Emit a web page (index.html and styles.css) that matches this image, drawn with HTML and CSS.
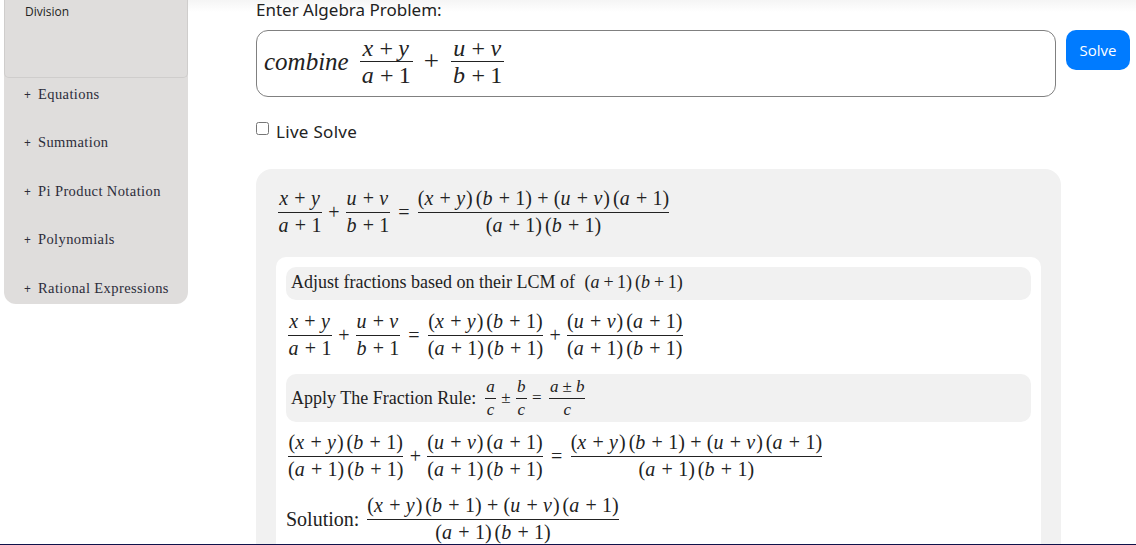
FILE: index.html
```html
<!DOCTYPE html>
<html lang="en">
<head>
<meta charset="utf-8">
<title>Algebra Calculator</title>
<link rel="stylesheet" href="styles.css">
</head>
<body>
<div class="page">
  <aside class="sidebar">
    <div class="panel"><span class="panel-item">Division</span></div>
    <ul class="topics">
      <li><span class="plus">+</span>Equations</li>
      <li><span class="plus">+</span>Summation</li>
      <li><span class="plus">+</span>Pi Product Notation</li>
      <li><span class="plus">+</span>Polynomials</li>
      <li><span class="plus">+</span>Rational Expressions</li>
    </ul>
  </aside>
  <main class="main">
    <label class="prompt">Enter Algebra Problem:</label>
    <div class="input-row">
      <div class="math-input math">
        <i class="combine">combine</i>
        <span class="frac"><span class="num"><i>x</i><b>+</b><i>y</i></span><span class="den"><i>a</i><b>+</b>1</span></span>
        <b class="big-op">+</b>
        <span class="frac"><span class="num"><i>u</i><b>+</b><i>v</i></span><span class="den"><i>b</i><b>+</b>1</span></span>
      </div>
      <button class="solve">Solve</button>
    </div>
    <label class="live"><input type="checkbox" class="live-box"><span>Live Solve</span></label>
    <section class="result">
      <div class="eq math first">
        <span class="frac simple"><span class="num"><i>x</i><b>+</b><i>y</i></span><span class="den"><i>a</i><b>+</b>1</span></span>
        <b class="op">+</b>
        <span class="frac simple"><span class="num"><i>u</i><b>+</b><i>v</i></span><span class="den"><i>b</i><b>+</b>1</span></span>
        <b class="op eqs">=</b>
        <span class="frac"><span class="num">(<i>x</i><b>+</b><i>y</i>)<u></u>(<i>b</i><b>+</b>1)<b>+</b>(<i>u</i><b>+</b><i>v</i>)<u></u>(<i>a</i><b>+</b>1)</span><span class="den">(<i>a</i><b>+</b>1)<u></u>(<i>b</i><b>+</b>1)</span></span>
      </div>
      <div class="steps">
        <div class="step-title">Adjust fractions based on their LCM of <span class="math inline-math">(<i>a</i><b>+</b>1)<u></u>(<i>b</i><b>+</b>1)</span></div>
        <div class="eq math">
          <span class="frac simple"><span class="num"><i>x</i><b>+</b><i>y</i></span><span class="den"><i>a</i><b>+</b>1</span></span>
          <b class="op">+</b>
          <span class="frac simple"><span class="num"><i>u</i><b>+</b><i>v</i></span><span class="den"><i>b</i><b>+</b>1</span></span>
          <b class="op eqs">=</b>
          <span class="frac"><span class="num">(<i>x</i><b>+</b><i>y</i>)<u></u>(<i>b</i><b>+</b>1)</span><span class="den">(<i>a</i><b>+</b>1)<u></u>(<i>b</i><b>+</b>1)</span></span>
          <b class="op">+</b>
          <span class="frac"><span class="num">(<i>u</i><b>+</b><i>v</i>)<u></u>(<i>a</i><b>+</b>1)</span><span class="den">(<i>a</i><b>+</b>1)<u></u>(<i>b</i><b>+</b>1)</span></span>
        </div>
        <div class="step-title rule-title">Apply The Fraction Rule:<span class="math small-eq"><span class="frac"><span class="num"><i>a</i></span><span class="den"><i>c</i></span></span><b class="op">±</b><span class="frac"><span class="num"><i>b</i></span><span class="den"><i>c</i></span></span><b class="op">=</b><span class="frac wide"><span class="num"><i>a</i><b>±</b><i>b</i></span><span class="den"><i>c</i></span></span></span></div>
        <div class="eq math third">
          <span class="frac"><span class="num">(<i>x</i><b>+</b><i>y</i>)<u></u>(<i>b</i><b>+</b>1)</span><span class="den">(<i>a</i><b>+</b>1)<u></u>(<i>b</i><b>+</b>1)</span></span>
          <b class="op">+</b>
          <span class="frac"><span class="num">(<i>u</i><b>+</b><i>v</i>)<u></u>(<i>a</i><b>+</b>1)</span><span class="den">(<i>a</i><b>+</b>1)<u></u>(<i>b</i><b>+</b>1)</span></span>
          <b class="op eqs">=</b>
          <span class="frac"><span class="num">(<i>x</i><b>+</b><i>y</i>)<u></u>(<i>b</i><b>+</b>1)<b>+</b>(<i>u</i><b>+</b><i>v</i>)<u></u>(<i>a</i><b>+</b>1)</span><span class="den">(<i>a</i><b>+</b>1)<u></u>(<i>b</i><b>+</b>1)</span></span>
        </div>
        <div class="eq math solution">
          <span class="sol-label">Solution:</span>
          <span class="frac"><span class="num">(<i>x</i><b>+</b><i>y</i>)<u></u>(<i>b</i><b>+</b>1)<b>+</b>(<i>u</i><b>+</b><i>v</i>)<u></u>(<i>a</i><b>+</b>1)</span><span class="den">(<i>a</i><b>+</b>1)<u></u>(<i>b</i><b>+</b>1)</span></span>
        </div>
      </div>
    </section>
  </main>
</div>
<div class="footer-line"></div>
</body>
</html>
```
FILE: styles.css
```css
* { box-sizing: border-box; }
html, body { margin: 0; height: 545px; overflow: hidden; background: #fff; }
body { display: flex; flex-direction: column; color: #222; }
.page { flex: 1; min-height: 0; display: flex; align-items: flex-start; overflow: hidden; position: relative; }
.page::before { content: ""; position: absolute; left: 188px; right: 0; top: 0; height: 12px; background: linear-gradient(#f5f5f5, #fff); }
.footer-line { height: 1px; background: #10124a; flex: none; }

.sidebar { width: 184px; margin-left: 4px; background: #dfdddc; border-radius: 0 0 12px 12px; flex: none; height: 304px; }
.panel { height: 78px; border: 1px solid #cfcdcc; border-top: 0; border-radius: 0 0 5px 5px; padding: 4px 0 0 20px; font: 12px/15px "Open Sans", sans-serif; color: #222; }
.topics { list-style: none; margin: 0; padding: 0; font: 14.5px/17px "Liberation Serif", serif; color: #2c2c3a; }
.topics li { height: 48.5px; padding: 7.7px 0 0 20px; white-space: nowrap; letter-spacing: .4px; }
.plus { display: inline-block; width: 14px; font-family: "Open Sans", sans-serif; font-size: 12px; }

.main { position: relative; margin-left: 68px; width: 874px; flex: none; }
.prompt { display: block; font: 17px/19px "Noto Sans", sans-serif; color: #222; height: 30px; }
.input-row { display: flex; gap: 10px; align-items: flex-start; }
.math-input { width: 800px; height: 67px; border: 1px solid #808080; border-radius: 12px; padding: 0 7px 4px; display: flex; align-items: center; font-size: 24px; }
.math .combine { font-size: 25px; margin-right: 11px; letter-spacing: 0; }
.math-input .frac .num, .math-input .frac .den { line-height: 26px; padding: 0 2px; }
.math-input b { margin: 0 5px; }
.math-input .big-op { margin: 0 12px 0 11px; font-size: 27px; }
.solve { width: 64px; height: 40px; border: 0; border-radius: 10px; background: #007bff; color: #fff; font: 15px "Open Sans", sans-serif; padding: 0; }
.live { display: flex; align-items: flex-start; margin-top: 24px; height: 24px; font: 17px/22px "Noto Sans", sans-serif; color: #222; letter-spacing: .3px; }
.live-box { width: 13px; height: 13px; margin: 1px 7px 0 0; }

.math { font-family: "Liberation Serif", serif; color: #222; }
.math b { font-weight: 400; margin: 0 5.3px; }
.math u { display: inline-block; width: 3px; text-decoration: none; }
.math i { letter-spacing: 1px; }
.frac { display: inline-flex; flex-direction: column; text-align: center; vertical-align: middle; white-space: nowrap; }
.simple { min-width: 44px; }
.num { display: block; border-bottom: 1px solid #222; }
.den { display: block; }

.result { margin-top: 24px; width: 805px; height: 500px; background: #f1f1f1; border-radius: 16px; padding: 17px 20px 0; }
.eq { display: flex; align-items: center; font-size: 20px; height: 53px; white-space: nowrap; }
.eq .num { line-height: 24px; padding-bottom: 2px; }
.eq .den { line-height: 25px; padding-bottom: 1px; }
.first { padding-left: 2px; }
.eq b.op { margin: 0 6.3px; }
.eq b.eqs { margin: 0 8.3px; }
.steps { margin-top: 18px; width: 765px; height: 400px; background: #fff; border-radius: 10px; padding: 10px; }
.step-title { height: 33px; background: #f1f1f1; border-radius: 10px; padding: 0 5px 2px; display: flex; align-items: center; font: 18px "Liberation Serif", serif; color: #222; white-space: pre; }
.inline-math { font-size: 18px; margin-left: 5px; }
.inline-math b { margin: 0 3.5px; }
.inline-math u { width: 3px; }
.inline-math i { letter-spacing: .5px; }
.steps > .eq { margin-top: 9px; padding-left: 2px; }
.rule-title { height: 48px; margin-top: 12px; padding-bottom: 0; }
.small-eq { display: inline-flex; align-items: center; font-size: 17px; margin-left: 9px; }
.small-eq .num, .small-eq .den { line-height: 22px; padding: 0 1px; }
.small-eq b { margin: 0 4px; }
.small-eq b.op { margin: 0 5.5px; }
.small-eq i { letter-spacing: 0; }
.small-eq .wide { margin-left: 2px; }
.steps > .eq.third { margin-top: 8px; }
.steps > .eq.solution { padding-left: 0; margin-top: 10px; }
.sol-label { font-size: 20px; margin-right: 8px; }
```
